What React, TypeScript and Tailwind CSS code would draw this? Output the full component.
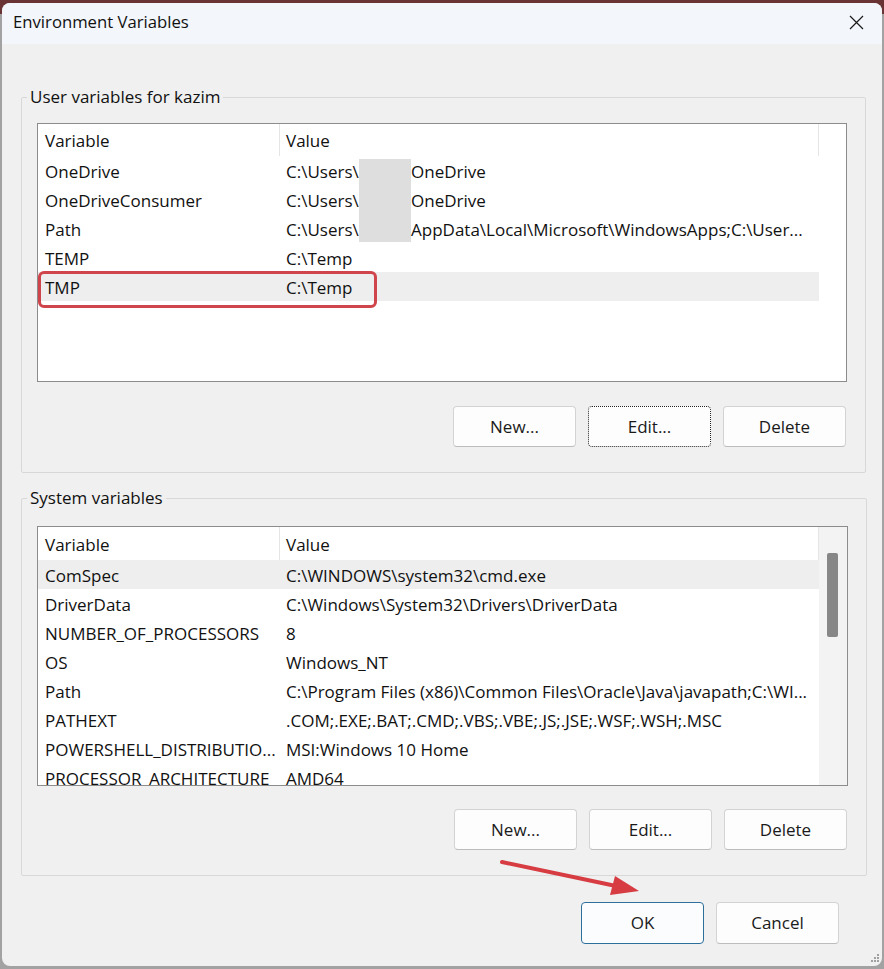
import React from "react";

type Row = { name: string; value: React.ReactNode; selected?: boolean };

const F = "font-['Open_Sans','Noto_Sans',sans-serif]";

function Redacted({ rest, cls }: { rest: string; cls: string }) {
  return (
    <span className="flex h-full items-stretch">
      <span className="flex items-center w-[73px] shrink-0 pt-[2px]">C:\Users\</span>
      <span className={`w-[52px] shrink-0 bg-[#dedede] ${cls}`} />
      <span className="flex items-center pt-[2px]">{rest}</span>
    </span>
  );
}

const userRows: Row[] = [
  { name: "OneDrive", value: <Redacted rest="OneDrive" cls="mt-[3px]" /> },
  { name: "OneDriveConsumer", value: <Redacted rest="OneDrive" cls="" /> },
  {
    name: "Path",
    value: (
      <Redacted
        rest="AppData\Local\Microsoft\WindowsApps;C:\User..."
        cls="mb-[1px]"
      />
    ),
  },
  { name: "TEMP", value: "C:\\Temp" },
  { name: "TMP", value: "C:\\Temp", selected: true },
];

const sysRows: Row[] = [
  { name: "ComSpec", value: "C:\\WINDOWS\\system32\\cmd.exe", selected: true },
  { name: "DriverData", value: "C:\\Windows\\System32\\Drivers\\DriverData" },
  { name: "NUMBER_OF_PROCESSORS", value: "8" },
  { name: "OS", value: "Windows_NT" },
  {
    name: "Path",
    value: "C:\\Program Files (x86)\\Common Files\\Oracle\\Java\\javapath;C:\\WI...",
  },
  { name: "PATHEXT", value: ".COM;.EXE;.BAT;.CMD;.VBS;.VBE;.JS;.JSE;.WSF;.WSH;.MSC" },
  { name: "POWERSHELL_DISTRIBUTIO...", value: "MSI:Windows 10 Home" },
  { name: "PROCESSOR_ARCHITECTURE", value: "AMD64" },
];

function Table({ rows, headH }: { rows: Row[]; headH: string }) {
  return (
    <div className="w-[781px] shrink-0">
      <div className={`flex ${headH} bg-white`}>
        <div className="w-[242px] border-r border-[#e5e5e5] pl-[7px] pt-[2px] flex items-center">Variable</div>
        <div className="w-[539px] border-r border-[#e5e5e5] pl-[6px] pt-[2px] flex items-center">Value</div>
      </div>
      {rows.map((r, i) => (
        <div
          key={i}
          className={`flex h-[29px] whitespace-nowrap ${r.selected ? "bg-[#eeeeee]" : ""}`}
        >
          <div className="w-[242px] shrink-0 pl-[7px] pt-[2px] flex items-center overflow-hidden">{r.name}</div>
          <div
            className={`w-[539px] shrink-0 pl-[6px] flex items-center overflow-hidden ${
              typeof r.value === "string" ? "pt-[2px]" : "self-stretch"
            }`}
          >
            {r.value}
          </div>
        </div>
      ))}
    </div>
  );
}

function Btn({
  children,
  focus,
  primary,
  h = "h-[41px]",
}: {
  children: React.ReactNode;
  focus?: boolean;
  primary?: boolean;
  h?: string;
}) {
  const border = focus
    ? "border border-dotted border-[#222222]"
    : primary
    ? "border border-[#2d6f9b]"
    : "border border-[#d3d3d3] border-b-[#bcbcbc]";
  return (
    <div
      className={`w-[123px] ${h} rounded-[4px] ${border} ${
        primary ? "bg-[#fbfcfd]" : "bg-[#fdfdfd]"
      } flex items-center justify-center text-[#1a1a1a]`}
    >
      {children}
    </div>
  );
}

export default function App() {
  return (
    <div
      className={`relative w-[884px] h-[969px] pt-[3px] pl-[2px] bg-[linear-gradient(to_bottom,#6b3434_0px,#6b3434_14px,#a2a2a2_14px)] ${F} text-[17px] text-[#111111]`}
    >
      <div className="relative w-[880px] h-[963px] rounded-[8px] overflow-hidden bg-[#f0f0f0] flex flex-col">
        {/* title bar */}
        <div className="h-[41px] bg-[#f3f6fa] flex items-center justify-between pl-[11px] pr-[18px] pb-[3px]">
          <span className="text-[16.7px] text-[#111111]">Environment Variables</span>
          <svg width="15" height="15" viewBox="0 0 15 15">
            <path d="M1 1 L14 14 M14 1 L1 14" stroke="#1a1a1a" strokeWidth="1.2" fill="none" />
          </svg>
        </div>

        <div className="pl-[19px] pr-[16px]">
          {/* User variables */}
          <fieldset className="mt-[42px] border border-[#d8d8d8] rounded-[2px]">
            <legend className="ml-[5px] px-[3px] leading-[22px]">User variables for kazim</legend>
            <div className="pl-[15px] pr-[18px] pb-[25px]">
              <div className="mt-[15px] h-[259px] border border-[#8c8c8c] bg-white overflow-hidden">
                <Table rows={userRows} headH="h-[32px]" />
              </div>
              <div className="mt-[24px] mr-[1px] flex justify-end gap-[12px]">
                <Btn>New...</Btn>
                <Btn focus>Edit...</Btn>
                <Btn>Delete</Btn>
              </div>
            </div>
          </fieldset>

          {/* System variables */}
          <fieldset className="mt-[14px] border border-[#d8d8d8] rounded-[2px]">
            <legend className="ml-[5px] px-[3px] leading-[22px]">System variables</legend>
            <div className="pl-[15px] pr-[18px] pb-[25px]">
              <div className="mt-[17px] h-[260px] border border-[#8c8c8c] bg-white overflow-hidden flex">
                <Table rows={sysRows} headH="h-[33px]" />
                <div className="w-[28px] bg-[#f3f3f3] pl-[8px] pt-[26px]">
                  <div className="w-[11px] h-[84px] bg-[#878787] rounded-[2px]" />
                </div>
              </div>
              <div className="mt-[23px] mr-[1px] flex justify-end gap-[12px]">
                <Btn>New...</Btn>
                <Btn>Edit...</Btn>
                <Btn>Delete</Btn>
              </div>
            </div>
          </fieldset>

          <div className="mt-[26px] pr-[27px] flex justify-end gap-[12px]">
            <Btn primary h="h-[42px]">OK</Btn>
            <Btn h="h-[42px]">Cancel</Btn>
          </div>
        </div>

        {/* resize grip */}
        <svg className="absolute right-[2px] bottom-[3px]" width="9" height="9" viewBox="0 0 9 9">
          <rect x="6" y="0" width="2" height="2" fill="#a0a0a0" />
          <rect x="3" y="3" width="2" height="2" fill="#a0a0a0" />
          <rect x="6" y="3" width="2" height="2" fill="#a0a0a0" />
          <rect x="0" y="6" width="2" height="2" fill="#a0a0a0" />
          <rect x="3" y="6" width="2" height="2" fill="#a0a0a0" />
          <rect x="6" y="6" width="2" height="2" fill="#a0a0a0" />
        </svg>
      </div>

      {/* red highlight around TMP row */}
      <div className="absolute left-[38px] top-[271px] w-[339px] h-[37px] border-[3px] border-[#d0454c] rounded-[6px] pointer-events-none" />

      {/* red arrow */}
      <svg className="absolute left-0 top-0 pointer-events-none" width="884" height="969">
        <line x1="502" y1="862" x2="616" y2="886" stroke="#d63c42" strokeWidth="4" strokeLinecap="round" />
        <polygon points="639,891 610,895 615,876" fill="#d63c42" />
      </svg>
    </div>
  );
}
